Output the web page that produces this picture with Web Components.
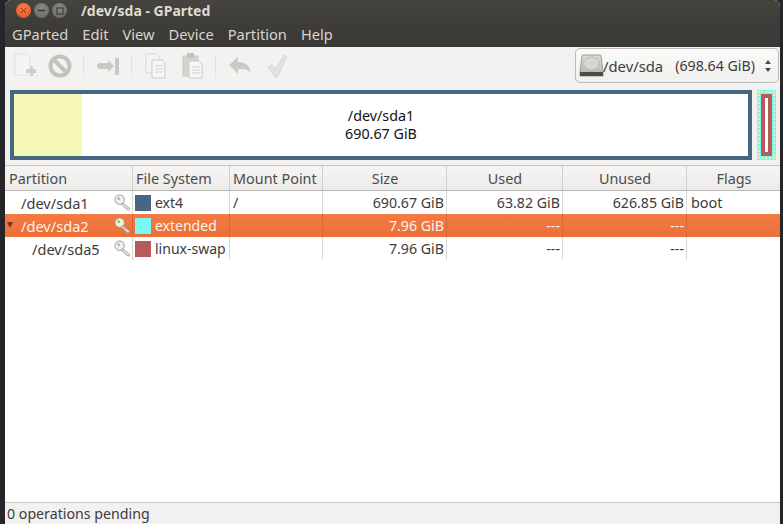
<!DOCTYPE html>
<html lang="en">
  <head>
    <meta charset="UTF-8" />
    <title>/dev/sda - GParted</title>
    <style>
      html, body {
        margin: 0;
        height: 100%;
        background: #26262a;
        font-family: "Noto Sans", sans-serif;
        overflow: hidden;
      }
    </style>
  </head>
  <body>
    <gp-window>
      <gp-titlebar slot="top" title-text="/dev/sda - GParted"></gp-titlebar>
      <gp-menubar slot="top" items="GParted,Edit,View,Device,Partition,Help"></gp-menubar>
      <gp-toolbar slot="top"></gp-toolbar>
      <gp-diskmap slot="top"></gp-diskmap>
      <gp-table></gp-table>
      <gp-status slot="bottom">0 operations pending</gp-status>
    </gp-window>

    <template id="key-icon">
      <svg width="17" height="17" viewBox="0 0 18 18">
        <path d="M8 8.500l8.500 6.500-.6 2-2.400-.4-.5-1.600-1.600-.2-.4-1.500L6.500 10z" fill="#e6e6e3" stroke="#9a9a95" stroke-width=".9" stroke-linejoin="round" />
        <circle cx="6" cy="6" r="5" fill="var(--key-head, #f0f0ee)" stroke="#9a9a95" />
        <circle cx="5" cy="5" r="1.500" fill="var(--key-dot, #b4b4af)" />
      </svg>
    </template>

    <script>
      class GpWindow extends HTMLElement {
        constructor() {
          super();
          let shadow = this.attachShadow({ mode: 'open' });
          shadow.innerHTML = `
            <style>
              :host {
                display: flex;
                flex-direction: column;
                height: 524px;
                margin: 0 3px 0 5px;
                background: #f2f1f0;
                color: #3c3c3c;
                font-size: 14px;
                border-radius: 6px 6px 0 0;
                overflow: hidden;
              }
              .main {
                flex: 1;
                min-height: 0;
                display: flex;
                flex-direction: column;
              }
            </style>
            <slot name="top"></slot>
            <div class="main"><slot></slot></div>
            <slot name="bottom"></slot>
          `;
        }
      }

      class GpTitlebar extends HTMLElement {
        constructor() {
          super();
          let shadow = this.attachShadow({ mode: 'open' });
          shadow.innerHTML = `
            <style>
              :host {
                display: flex;
                align-items: center;
                height: 21px;
                padding-left: 11px;
                background: linear-gradient(#45443f, #3e3d39);
                color: #dfdbd2;
                font-weight: 700;
                font-size: 14px;
              }
              .btn {
                width: 15px;
                height: 15px;
                border-radius: 50%;
                margin-right: 3px;
                display: flex;
                align-items: center;
                justify-content: center;
                background: radial-gradient(circle at 50% 35%, #8b8a85, #64635e);
              }
              .close { background: radial-gradient(circle at 50% 35%, #f6824e, #dd4e1c); }
              .label { margin-left: 11px; }
            </style>
            <span class="btn close">
              <svg width="7" height="7" viewBox="0 0 7 7"><path d="M1 1l5 5M6 1L1 6" stroke="#7c3013" stroke-width="1" /></svg>
            </span>
            <span class="btn">
              <svg width="7" height="7" viewBox="0 0 7 7"><path d="M0 3.500h7" stroke="#35342f" stroke-width="1.500" /></svg>
            </span>
            <span class="btn">
              <svg width="8" height="8" viewBox="0 0 8 8"><rect x="1" y="1" width="6" height="6" fill="none" stroke="#3f3e3a" stroke-width="1.200" /></svg>
            </span>
            <span class="label"></span>
          `;
          shadow.querySelector('.label').textContent = this.getAttribute('title-text');
        }
      }

      class GpMenubar extends HTMLElement {
        constructor() {
          super();
          let shadow = this.attachShadow({ mode: 'open' });
          shadow.innerHTML = `
            <style>
              :host {
                display: flex;
                align-items: center;
                gap: 14px;
                height: 26px;
                padding-left: 7px;
                background: linear-gradient(#3e3d39, #3a3935);
                color: #d8d4cb;
                font-size: 14.650px;
              }
            </style>
          `;
          this.getAttribute('items').split(',').forEach((name) => {
            let item = document.createElement('span');
            item.textContent = name;
            shadow.appendChild(item);
          });
        }
      }

      class GpToolbar extends HTMLElement {
        constructor() {
          super();
          let shadow = this.attachShadow({ mode: 'open' });
          shadow.innerHTML = `
            <style>
              :host {
                display: flex;
                align-items: center;
                height: 37px;
                padding: 0 1px 0 7px;
                background: #f3f2f1;
              }
              svg { flex: none; filter: blur(.5px); }
              .sep {
                width: 1px;
                height: 24px;
                background: #e4e3e1;
                flex: none;
              }
              .combo {
                margin-left: auto;
                width: 204px;
                height: 35px;
                box-sizing: border-box;
                border: 1px solid #bdbbb6;
                border-radius: 5px;
                background: linear-gradient(#fbfbfa, #f0efee);
                display: flex;
                align-items: center;
                padding-left: 3px;
                font-size: 14.500px;
                color: #3c3c3c;
              }
              .combo svg { filter: none; }
              .dev { margin-left: -1px; margin-right: 12px; font-size: 14.800px; }
              .size { font-size: 14.200px; }
              .arrows { margin-left: auto; margin-right: 6px; }
            </style>
            <svg width="26" height="28" viewBox="0 0 26 28">
              <path d="M3 2h11l4 4v17H3z" fill="#f5f5f4" stroke="#e0dfdd" />
              <path d="M14 17h4v-3h3v3h3v4h-3v3h-3v-3h-4z" fill="#cfcecb" />
            </svg>
            <svg width="26" height="28" viewBox="0 0 26 28" style="margin-left:9px">
              <circle cx="13" cy="14" r="9.500" fill="none" stroke="#c2c1be" stroke-width="4" />
              <path d="M6.500 7.500l13 13" stroke="#c2c1be" stroke-width="4" />
            </svg>
            <span class="sep" style="margin:0 11px 0 10px"></span>
            <svg width="26" height="28" viewBox="0 0 26 28">
              <path d="M2 14q0-3 3-3h8V8l6 6-6 6v-3H5q-3 0-3-3z" fill="#c9c8c5" />
              <rect x="20" y="6" width="4" height="17" fill="#c9c8c5" />
            </svg>
            <span class="sep" style="margin:0 12px 0 10px"></span>
            <svg width="24" height="28" viewBox="0 0 24 28">
              <path d="M2 2h10l3 3v16H2z" fill="#f4f4f3" stroke="#d8d7d5" />
              <path d="M8 8h10l3 3v15H8z" fill="#f6f6f5" stroke="#cbcac7" />
              <path d="M11 14h8M11 17h8M11 20h8" stroke="#d2d1ce" />
            </svg>
            <svg width="24" height="28" viewBox="0 0 24 28" style="margin-left:13px">
              <rect x="2" y="4" width="15" height="20" fill="#d4d3d0" stroke="#c8c7c4" />
              <rect x="6" y="1" width="7" height="5" fill="#c2c1be" />
              <path d="M8 9h10l3 3v14H8z" fill="#f6f6f5" stroke="#cbcac7" />
              <path d="M11 15h8M11 18h8M11 21h8" stroke="#d2d1ce" />
            </svg>
            <span class="sep" style="margin:0 11px 0 10px"></span>
            <svg width="26" height="28" viewBox="0 0 26 28">
              <path d="M11 5v5c7 0 12 3 13 12-3-5-6-5-13-5v5L2 13z" fill="#cbcac7" />
            </svg>
            <svg width="26" height="28" viewBox="0 0 26 28" style="margin-left:11px">
              <path d="M4 15l4-2 4 4 8-14 3 2-10 20h-2z" fill="#e4e3e1" stroke="#d4d3d0" />
            </svg>
            <div class="combo">
              <svg width="25" height="25" viewBox="0 0 25 25">
                <defs>
                  <linearGradient id="hd" x1="0" y1="0" x2="0" y2="1">
                    <stop offset="0" stop-color="#dcdcd8" />
                    <stop offset="1" stop-color="#b4b4b0" />
                  </linearGradient>
                </defs>
                <path d="M3 3q0-1 1-1h17q1 0 1 1l2 16v4H1v-4z" fill="url(#hd)" stroke="#9c9c97" />
                <ellipse cx="12.500" cy="10.500" rx="8" ry="6.500" fill="#d6d6d2" stroke="#b8b8b3" />
                <rect x="1" y="19" width="23" height="4" fill="#4a4a47" />
              </svg><span class="dev">/dev/sda</span><span class="size">(698.64 GiB)</span>
              <svg class="arrows" width="8" height="16" viewBox="0 0 8 16">
                <path d="M4 2l3 4H1zM4 14l3-4H1z" fill="#4a4a48" />
              </svg>
            </div>
          `;
        }
      }

      class GpDiskmap extends HTMLElement {
        constructor() {
          super();
          let shadow = this.attachShadow({ mode: 'open' });
          shadow.innerHTML = `
            <style>
              :host {
                display: flex;
                gap: 5px;
                height: 70px;
                padding: 6px 4px 5px 5px;
                background: #f2f1f0;
              }
              .primary {
                flex: 1;
                box-sizing: border-box;
                border: 4px solid #466681;
                background: #fff;
                display: grid;
                grid-template-columns: 68px 1fr;
                color: #111;
                font-size: 14.300px;
                line-height: 18px;
              }
              .used { background: #f6f8b5; }
              .label { align-self: center; text-align: center; padding-right: 68px; }
              .ext {
                width: 19px;
                box-sizing: border-box;
                padding: 4px;
                background: #7df6f6;
                outline: 2px dotted #f3ef9a;
                outline-offset: -3px;
                display: flex;
              }
              .swap {
                flex: 1;
                border: 4px solid #b8595a;
                background: #fff;
              }
            </style>
            <div class="primary">
              <div class="used"></div>
              <div class="label">/dev/sda1<br />690.67 GiB</div>
            </div>
            <div class="ext"><div class="swap"></div></div>
          `;
        }
      }

      const ROWS = [
        { name: '/dev/sda1', indent: 16, color: '#466681', fs: 'ext4', mount: '/', size: '690.67 GiB', used: '63.82 GiB', unused: '626.85 GiB', flags: 'boot' },
        { name: '/dev/sda2', indent: 16, color: '#7df6f6', fs: 'extended', mount: '', size: '7.96 GiB', used: '---', unused: '---', flags: '', selected: true },
        { name: '/dev/sda5', indent: 27, color: '#b8595a', fs: 'linux-swap', mount: '', size: '7.96 GiB', used: '---', unused: '---', flags: '' },
      ];

      class GpTable extends HTMLElement {
        constructor() {
          super();
          let shadow = this.attachShadow({ mode: 'open' });
          shadow.innerHTML = `
            <style>
              :host {
                display: block;
                flex: 1;
                background: #fff;
                border-top: 1px solid #c9c7c3;
                font-size: 14.200px;
                color: #3c3c3c;
              }
              .row {
                display: grid;
                grid-template-columns: 128px 97px 93px 124px 116px 124px 1fr;
                height: 23px;
              }
              .head {
                height: 24px;
                border-bottom: 1px solid #b9b7b3;
                background: linear-gradient(#f6f5f4, #ecebe9);
                color: #4c4c4c;
                font-size: 14.400px;
              }
              .cell {
                display: flex;
                align-items: center;
                min-width: 0;
                box-sizing: border-box;
                padding: 0 2px 0 3px;
                border-right: 1px solid #d8d7d4;
                white-space: nowrap;
              }
              .head .cell { border-right-color: #d2d0cc; }
              .head .cell:first-child { padding-left: 4px; }
              .cell:last-child { border-right: 0; }
              .center { justify-content: center; }
              .right { justify-content: flex-end; }
              .selected {
                background: linear-gradient(#f47b45, #ec6f38);
                color: #fdf2ea;
                --key-head: #f0f2d8;
                --key-dot: #a8ac80;
              }
              .selected .cell { border-right-color: #d9683a; }
              .name { position: relative; font-size: 14.600px; }
              .name svg { margin-left: auto; margin-right: -1px; flex: none; }
              .fs { font-size: 14px; }
              .flags { font-size: 14.400px; padding-left: 4px; }
              .swatch {
                width: 16px;
                height: 16px;
                flex: none;
                margin-right: 4px;
                margin-left: -1px;
              }
              .tri {
                position: absolute;
                left: 2px;
                top: 8px;
                width: 0;
                height: 0;
                border: 3px solid transparent;
                border-top: 6px solid #6b3a20;
                border-bottom: 0;
              }
            </style>
            <div class="row head">
              <div class="cell">Partition</div>
              <div class="cell">File System</div>
              <div class="cell">Mount Point</div>
              <div class="cell center">Size</div>
              <div class="cell center">Used</div>
              <div class="cell center">Unused</div>
              <div class="cell center">Flags</div>
            </div>
          `;
          let keyIcon = document.getElementById('key-icon');
          ROWS.forEach((r) => {
            let row = document.createElement('div');
            row.className = 'row' + (r.selected ? ' selected' : '');
            row.innerHTML = `
              <div class="cell name" style="padding-left:${r.indent}px">
                ${r.selected ? '<span class="tri"></span>' : ''}
                <span>${r.name}</span>
              </div>
              <div class="cell fs"><span class="swatch" style="background:${r.color}"></span>${r.fs}</div>
              <div class="cell">${r.mount}</div>
              <div class="cell right">${r.size}</div>
              <div class="cell right">${r.used}</div>
              <div class="cell right">${r.unused}</div>
              <div class="cell flags">${r.flags}</div>
            `;
            row.querySelector('.name').appendChild(keyIcon.content.cloneNode(true));
            shadow.appendChild(row);
          });
        }
      }

      class GpStatus extends HTMLElement {
        constructor() {
          super();
          let shadow = this.attachShadow({ mode: 'open' });
          shadow.innerHTML = `
            <style>
              :host {
                display: flex;
                align-items: center;
                height: 21px;
                padding-left: 2px;
                border-top: 1px solid #c9c7c3;
                background: #f2f1f0;
                color: #3c3c3c;
                font-size: 14.200px;
              }
            </style>
            <slot></slot>
          `;
        }
      }

      customElements.define('gp-window', GpWindow);
      customElements.define('gp-titlebar', GpTitlebar);
      customElements.define('gp-menubar', GpMenubar);
      customElements.define('gp-toolbar', GpToolbar);
      customElements.define('gp-diskmap', GpDiskmap);
      customElements.define('gp-table', GpTable);
      customElements.define('gp-status', GpStatus);
    </script>
  </body>
</html>
